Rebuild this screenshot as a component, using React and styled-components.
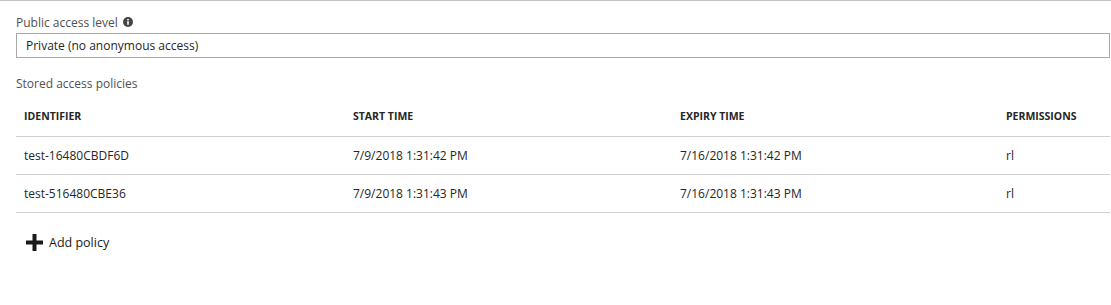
import React from "react";
import styled, { createGlobalStyle } from "styled-components";

const Global = createGlobalStyle`
  html, body { margin: 0; padding: 0; background: #fff; }
  body { font-family: "Open Sans", "Noto Sans", sans-serif; color: #333; }
`;

const Page = styled.div`
  border-top: 1px solid #c4c4c4;
  padding: 0 1px 0 16px;
  width: 1111px;
  box-sizing: border-box;
`;

const FieldLabel = styled.div`
  display: flex;
  align-items: center;
  gap: 5px;
  font-size: 12px;
  color: #505050;
  height: 16px;
  margin-top: 13px;
`;

const InfoIcon = styled.span`
  display: inline-flex;
  width: 10px;
  height: 10px;
`;

const SelectBox = styled.div`
  margin-top: 3px;
  height: 23px;
  border: 1px solid #a9a9a9;
  display: flex;
  align-items: center;
  padding-left: 9px;
  font-size: 12px;
  color: #262626;
`;

const SectionTitle = styled.div`
  font-size: 12px;
  color: #505050;
  margin-top: 17px;
  height: 18px;
  line-height: 18px;
`;

const Table = styled.div`
  margin-top: 12px;
`;

const Row = styled.div`
  display: grid;
  grid-template-columns: 329px 327px 326px 1fr;
  height: ${(p) => p.$h}px;
  align-items: ${(p) => (p.$head ? "start" : "center")};
  border-bottom: 1px solid #d0d0d0;
  box-sizing: border-box;
`;

const HeadCell = styled.div`
  padding-left: 8px;
  font-size: 10.5px;
  font-weight: 700;
  color: #262626;
  line-height: 14px;
  padding-top: 4px;
  white-space: nowrap;
`;

const Cell = styled.div`
  padding-left: 8px;
  font-size: 12px;
  color: #262626;
  white-space: nowrap;
`;

const AddButton = styled.button`
  margin-top: 21px;
  margin-left: 10px;
  display: flex;
  align-items: center;
  gap: 6px;
  background: none;
  border: 0;
  padding: 0;
  font-family: inherit;
  font-size: 12.5px;
  color: #1a1a1a;
  cursor: pointer;
`;

const rows = [
  ["test-16480CBDF6D", "7/9/2018 1:31:42 PM", "7/16/2018 1:31:42 PM", "rl"],
  ["test-516480CBE36", "7/9/2018 1:31:43 PM", "7/16/2018 1:31:43 PM", "rl"],
];

export default function App() {
  return (
    <>
      <Global />
      <Page>
        <FieldLabel>
          Public access level
          <InfoIcon>
            <svg width="10" height="10" viewBox="0 0 10 10">
              <circle cx="5" cy="5" r="5" fill="#444" />
              <rect x="4.2" y="4.2" width="1.6" height="3.6" fill="#fff" />
              <rect x="4.2" y="2" width="1.6" height="1.4" fill="#fff" />
            </svg>
          </InfoIcon>
        </FieldLabel>
        <SelectBox>Private (no anonymous access)</SelectBox>
        <SectionTitle>Stored access policies</SectionTitle>
        <Table>
          <Row $head $h={32}>
            <HeadCell>IDENTIFIER</HeadCell>
            <HeadCell>START TIME</HeadCell>
            <HeadCell>EXPIRY TIME</HeadCell>
            <HeadCell>PERMISSIONS</HeadCell>
          </Row>
          {rows.map((r) => (
            <Row key={r[0]} $h={38}>
              {r.map((c, i) => (
                <Cell key={i}>{c}</Cell>
              ))}
            </Row>
          ))}
        </Table>
        <AddButton>
          <svg width="17" height="17" viewBox="0 0 17 17">
            <rect x="6.5" y="0" width="4" height="17" fill="#1a1a1a" />
            <rect x="0" y="6.5" width="17" height="4" fill="#1a1a1a" />
          </svg>
          Add policy
        </AddButton>
      </Page>
    </>
  );
}
